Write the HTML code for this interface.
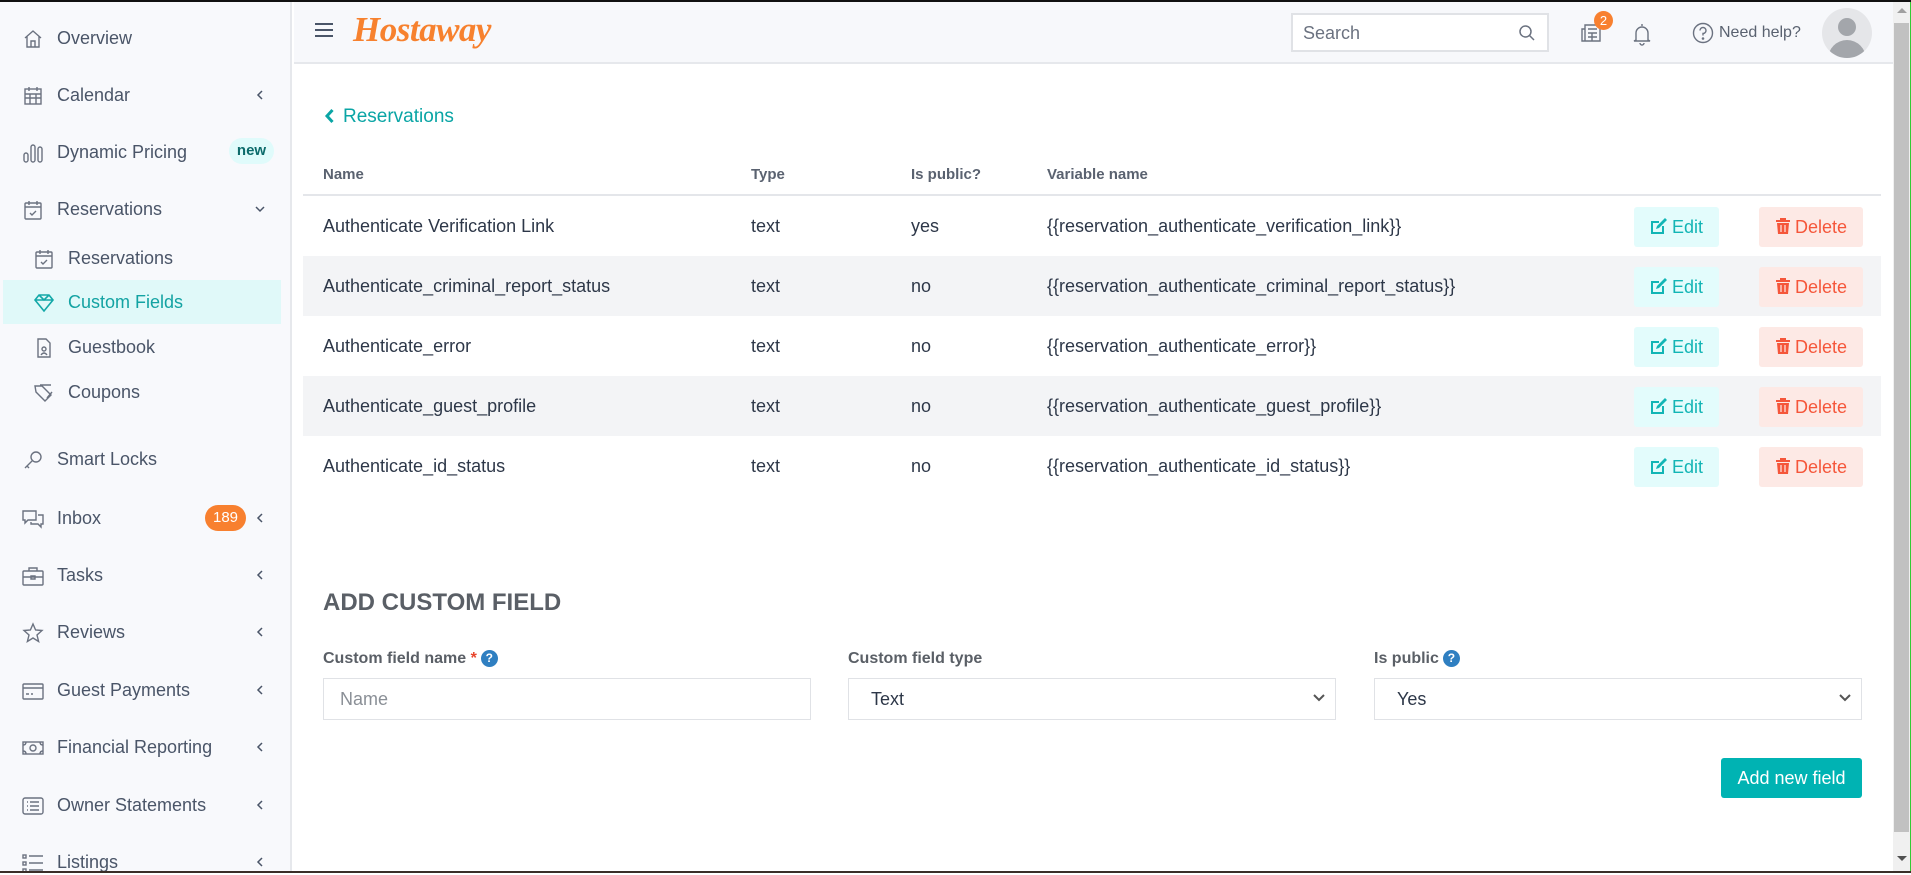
<!DOCTYPE html>
<html><head><meta charset="utf-8"><style>
*{box-sizing:border-box;margin:0;padding:0}
body{width:1911px;height:873px;overflow:hidden;position:relative;background:#fff;font-family:"Liberation Sans",sans-serif;color:#2d3748}
.a{position:absolute}
#top{left:0;top:0;width:1911px;height:2px;background:#111}
#bot{left:0;top:871px;width:1911px;height:2px;background:#3a2e28}
#side{left:0;top:2px;width:292px;height:869px;background:#f8f9fc;border-right:2px solid #e6e8ec}
.si{position:absolute;left:0;width:290px;height:26px;line-height:26px;font-size:18px;color:#4a5568}
.si svg{position:absolute;left:22px;top:3px}
.si span.t{position:absolute;left:57px}
.si.sub svg{left:33px}
.si.sub span.t{left:68px}
.si svg.chev{position:absolute;left:255px;top:8px}
#hdr{left:294px;top:2px;width:1599px;height:62px;background:#f7f8fb;border-bottom:2px solid #e6e8ec}
.th{font-size:15px;color:#5a6270;top:166px;font-weight:bold}
.row{position:absolute;left:303px;width:1578px;height:60px}
.row.g{background:#f3f4f6}
.c{position:absolute;top:0;line-height:60px;font-size:18px;color:#2d3748}
.ed{position:absolute;left:1331px;top:11px;width:85px;height:40px;background:#e3fcfc;border-radius:3px;color:#12b5b5;font-size:18px;line-height:40px;text-align:center}
.dl{position:absolute;left:1456px;top:11px;width:104px;height:40px;background:#fde9e5;border-radius:3px;color:#f5563a;font-size:18px;line-height:40px;text-align:center}
.ed svg,.dl svg{vertical-align:-2px;margin-right:4px}
.lbl{font-size:16px;font-weight:bold;color:#5a5f66;top:650px}
.inp{top:678px;width:488px;height:42px;border:1px solid #e0e2e6;background:#fff;font-size:18px;line-height:40px;padding-left:16px}
.inp svg{position:absolute;right:10px;top:15px}
.q{display:inline-block;width:17px;height:17px;border-radius:50%;background:#2f7fc1;color:#fff;font-size:12px;line-height:17px;text-align:center;vertical-align:1px;margin-left:4px}
</style></head><body>
<svg width="0" height="0" style="position:absolute"><defs>
<symbol id="chl" viewBox="0 0 10 10"><path d="M7 1L3 5L7 9" fill="none" stroke="#4a5568" stroke-width="1.5"/></symbol>
<symbol id="pen" viewBox="0 0 18 18"><path d="M13 9V16H2V5H9" fill="none" stroke="currentColor" stroke-width="2"/><path d="M15 1L17 3L9 11L6 12L7 9Z" fill="currentColor"/></symbol>
<symbol id="trash" viewBox="0 0 16 18"><path d="M1 3H15V5H1ZM5 1H11V3H5ZM2 6H14L13 17H3Z" fill="currentColor"/><path d="M6 8V15M10 8V15" stroke="#fde9e5" stroke-width="1.2"/></symbol>
</defs></svg>
<div class="a" id="top"></div>
<div class="a" id="side">
 <div class="si" style="top:23px"><svg width="22" height="22" viewBox="0 0 22 22" fill="none" stroke="#6b7280" stroke-width="1.4"><path d="M3 10 L11 3 L19 10 M5 8 V19 H17 V8 M9 19 V13 H13 V19"/></svg><span class="t">Overview</span></div>
 <div class="si" style="top:80px"><svg width="22" height="22" viewBox="0 0 22 22" fill="none" stroke="#6b7280" stroke-width="1.4"><rect x="3" y="4" width="16" height="15"/><path d="M7 2v4M15 2v4M3 9h16M3 13h16M8 9v10M14 9v10"/></svg><span class="t">Calendar</span><svg class="chev" width="10" height="10"><use href="#chl"/></svg></div>
 <div class="si" style="top:137px"><svg width="22" height="22" viewBox="0 0 22 22" fill="none" stroke="#6b7280" stroke-width="1.4"><rect x="2" y="11" width="4" height="9" rx="2"/><rect x="9" y="3" width="4" height="17" rx="2"/><rect x="16" y="5" width="4" height="15" rx="2"/></svg><span class="t">Dynamic Pricing</span><span class="a" style="left:229px;top:-1px;width:45px;height:26px;border-radius:13px;background:#e0fbfb;color:#0c6b6b;font-weight:bold;font-size:15px;text-align:center;line-height:26px">new</span></div>
 <div class="si" style="top:194px"><svg width="22" height="22" viewBox="0 0 22 22" fill="none" stroke="#6b7280" stroke-width="1.4"><rect x="3" y="4" width="16" height="16" rx="1"/><path d="M7 2v4M15 2v4M3 8h16M8 14l2 2 4-4"/></svg><span class="t">Reservations</span><svg class="chev" width="10" height="10" style="transform:rotate(-90deg)"><use href="#chl"/></svg></div>
 <div class="si sub" style="top:243px"><svg width="22" height="22" viewBox="0 0 22 22" fill="none" stroke="#6b7280" stroke-width="1.4"><rect x="3" y="4" width="16" height="16" rx="1"/><path d="M7 2v4M15 2v4M3 8h16M8 14l2 2 4-4"/></svg><span class="t">Reservations</span></div>
 <div class="a" style="left:3px;top:278px;width:278px;height:44px;background:#e0f9f9"></div>
 <div class="si sub" style="top:287px;color:#13a3a3"><svg width="22" height="22" viewBox="0 0 22 22" fill="none" stroke="#13a8a8" stroke-width="1.6"><path d="M2 8 L6 3 H16 L20 8 L11 19 Z M2 8 H20 M6 3 L11 8 L16 3"/></svg><span class="t">Custom Fields</span></div>
 <div class="si sub" style="top:332px"><svg width="22" height="22" viewBox="0 0 22 22" fill="none" stroke="#6b7280" stroke-width="1.4"><path d="M5 2 H13 L17 6 V20 H5 Z"/><circle cx="11" cy="12" r="2"/><path d="M8 18 Q11 14 14 18"/></svg><span class="t">Guestbook</span></div>
 <div class="si sub" style="top:377px"><svg width="22" height="22" viewBox="0 0 22 22" fill="none" stroke="#6b7280" stroke-width="1.4"><path d="M2 4 L9 4 L18 13 L12 19 L3 10 Z M7 3 L18 3 M19 10 L14 16"/></svg><span class="t">Coupons</span></div>
 <div class="si" style="top:444px"><svg width="22" height="22" viewBox="0 0 22 22" fill="none" stroke="#6b7280" stroke-width="1.4"><circle cx="14" cy="8" r="5"/><path d="M10 12 L3 19 M5 17 L7 19"/></svg><span class="t">Smart Locks</span></div>
 <div class="si" style="top:503px"><svg width="22" height="22" viewBox="0 0 22 22" fill="none" stroke="#6b7280" stroke-width="1.4"><path d="M1 3 H14 V12 H6 L3 15 V12 H1 Z M16 7 H21 V16 H19 V19 L16 16 H9 V14"/></svg><span class="t">Inbox</span><span class="a" style="left:205px;top:0;width:41px;height:26px;border-radius:13px;background:#f8802f;color:#fff;font-size:15px;text-align:center;line-height:26px">189</span><svg class="chev" width="10" height="10"><use href="#chl"/></svg></div>
 <div class="si" style="top:560px"><svg width="22" height="22" viewBox="0 0 22 22" fill="none" stroke="#6b7280" stroke-width="1.4"><rect x="1" y="6" width="20" height="14" rx="1"/><path d="M7 6 V3 H15 V6 M1 12 H21 M9 11 H13 V14 H9 Z"/></svg><span class="t">Tasks</span><svg class="chev" width="10" height="10"><use href="#chl"/></svg></div>
 <div class="si" style="top:617px"><svg width="22" height="22" viewBox="0 0 22 22" fill="none" stroke="#6b7280" stroke-width="1.4"><path d="M11 2 L13.6 8 L20 8.5 L15 13 L16.6 19.5 L11 16 L5.4 19.5 L7 13 L2 8.5 L8.4 8 Z"/></svg><span class="t">Reviews</span><svg class="chev" width="10" height="10"><use href="#chl"/></svg></div>
 <div class="si" style="top:675px"><svg width="22" height="22" viewBox="0 0 22 22" fill="none" stroke="#6b7280" stroke-width="1.4"><rect x="1" y="4" width="20" height="15" rx="1"/><path d="M1 8 H21 M4 14 H7 M9 14 H11"/></svg><span class="t">Guest Payments</span><svg class="chev" width="10" height="10"><use href="#chl"/></svg></div>
 <div class="si" style="top:732px"><svg width="22" height="22" viewBox="0 0 22 22" fill="none" stroke="#6b7280" stroke-width="1.4"><rect x="1" y="5" width="20" height="12"/><circle cx="11" cy="11" r="3"/><path d="M1 8 Q4 8 4 5 M18 5 Q18 8 21 8 M1 14 Q4 14 4 17 M18 17 Q18 14 21 14"/></svg><span class="t">Financial Reporting</span><svg class="chev" width="10" height="10"><use href="#chl"/></svg></div>
 <div class="si" style="top:790px"><svg width="22" height="22" viewBox="0 0 22 22" fill="none" stroke="#6b7280" stroke-width="1.4"><rect x="1" y="3" width="20" height="16" rx="2"/><path d="M5 7 H6 M8 7 H17 M5 11 H6 M8 11 H17 M5 15 H6 M8 15 H17"/></svg><span class="t">Owner Statements</span><svg class="chev" width="10" height="10"><use href="#chl"/></svg></div>
 <div class="si" style="top:847px"><svg width="22" height="22" viewBox="0 0 22 22" fill="none" stroke="#6b7280" stroke-width="1.4"><rect x="1" y="3" width="3" height="3"/><rect x="1" y="10" width="3" height="3"/><rect x="1" y="17" width="3" height="3"/><path d="M7 4 H21 M7 11 H21 M7 18 H21"/></svg><span class="t">Listings</span><svg class="chev" width="10" height="10"><use href="#chl"/></svg></div>
</div>

<div class="a" id="hdr">
 <svg class="a" style="left:20px;top:19px" width="20" height="18" viewBox="0 0 20 18" stroke="#4a5568" stroke-width="2"><path d="M1 3H19M1 9H19M1 15H19"/></svg>
 <div class="a" style="left:59px;top:8px;font-family:'Liberation Serif',serif;font-style:italic;font-weight:bold;font-size:35px;color:#f7812e;letter-spacing:-0.5px">Hostaway</div>
 <div class="a" style="left:997px;top:11px;width:258px;height:39px;border:2px solid #e0e2e6;background:#fff"><span class="a" style="left:10px;top:8px;font-size:18px;color:#6b7280">Search</span><svg class="a" style="left:225px;top:9px" width="18" height="18" viewBox="0 0 18 18" fill="none" stroke="#6b7280" stroke-width="1.5"><circle cx="7.5" cy="7.5" r="5.5"/><path d="M11.5 11.5L16 16"/></svg></div>
 <svg class="a" style="left:1287px;top:20px" width="22" height="22" viewBox="0 0 22 22" fill="none" stroke="#6b7280" stroke-width="1.4"><path d="M4 3H19V19H4ZM1 7H4V19H1ZM7 7H16M7 11H16M7 15H16M11 11V19"/></svg>
 <div class="a" style="left:1300px;top:9px;width:19px;height:19px;border-radius:50%;background:#f8802f;color:#fff;font-size:13px;text-align:center;line-height:19px">2</div>
 <svg class="a" style="left:1338px;top:20px" width="20" height="24" viewBox="0 0 20 24" fill="none" stroke="#6b7280" stroke-width="1.4"><path d="M10 2V4M4 18V11A6 6 0 0 1 16 11V18L18 19H2ZM8 21A2 2 0 0 0 12 21"/></svg>
 <svg class="a" style="left:1398px;top:20px" width="22" height="22" viewBox="0 0 22 22" fill="none" stroke="#6b7280" stroke-width="1.4"><circle cx="11" cy="11" r="9.5"/><path d="M8 8.5A3 3 0 1 1 11 11.5V13.5"/><circle cx="11" cy="16.5" r=".6" fill="#6b7280"/></svg>
 <div class="a" style="left:1425px;top:22px;font-size:16px;color:#5a6270">Need help?</div>
 <div class="a" style="left:1528px;top:6px;width:50px;height:50px;border-radius:50%;background:#e5e6e9;overflow:hidden"><div class="a" style="left:16px;top:10px;width:18px;height:18px;border-radius:50%;background:#a3a6ab"></div><div class="a" style="left:6px;top:32px;width:38px;height:24px;border-radius:19px 19px 0 0;background:#a3a6ab"></div></div>
</div>

<div class="a" style="left:1893px;top:2px;width:17px;height:869px;background:#f0f0f0"></div>
<div class="a" style="left:1894px;top:23px;width:15px;height:809px;background:#c1c1c1"></div>
<div class="a" style="left:1910px;top:2px;width:1px;height:869px;background:#3c3"></div>
<div class="a" style="left:1897px;top:8px;width:0;height:0;border-left:5px solid transparent;border-right:5px solid transparent;border-bottom:5px solid #a0a0a0"></div>
<div class="a" style="left:1897px;top:856px;width:0;height:0;border-left:5px solid transparent;border-right:5px solid transparent;border-top:5px solid #505050"></div>

<svg class="a" style="left:324px;top:108px" width="11" height="16" viewBox="0 0 11 16"><path d="M8.5 2L3 8L8.5 14" fill="none" stroke="#0aa5a5" stroke-width="3"/></svg>
<div class="a" style="left:343px;top:106px;font-size:19px;color:#0aa5a5">Reservations</div>

<div class="a th" style="left:323px">Name</div>
<div class="a th" style="left:751px">Type</div>
<div class="a th" style="left:911px">Is public?</div>
<div class="a th" style="left:1047px">Variable name</div>
<div class="a" style="left:303px;top:194px;width:1578px;height:2px;background:#e4e6ea"></div>

<div class="row" style="top:196px"><span class="c" style="left:20px">Authenticate Verification Link</span><span class="c" style="left:448px">text</span><span class="c" style="left:608px">yes</span><span class="c" style="left:744px">{{reservation_authenticate_verification_link}}</span><div class="ed"><svg width="18" height="18"><use href="#pen"/></svg>Edit</div><div class="dl"><svg width="16" height="18"><use href="#trash"/></svg>Delete</div></div>
<div class="row g" style="top:256px"><span class="c" style="left:20px">Authenticate_criminal_report_status</span><span class="c" style="left:448px">text</span><span class="c" style="left:608px">no</span><span class="c" style="left:744px">{{reservation_authenticate_criminal_report_status}}</span><div class="ed"><svg width="18" height="18"><use href="#pen"/></svg>Edit</div><div class="dl"><svg width="16" height="18"><use href="#trash"/></svg>Delete</div></div>
<div class="row" style="top:316px"><span class="c" style="left:20px">Authenticate_error</span><span class="c" style="left:448px">text</span><span class="c" style="left:608px">no</span><span class="c" style="left:744px">{{reservation_authenticate_error}}</span><div class="ed"><svg width="18" height="18"><use href="#pen"/></svg>Edit</div><div class="dl"><svg width="16" height="18"><use href="#trash"/></svg>Delete</div></div>
<div class="row g" style="top:376px"><span class="c" style="left:20px">Authenticate_guest_profile</span><span class="c" style="left:448px">text</span><span class="c" style="left:608px">no</span><span class="c" style="left:744px">{{reservation_authenticate_guest_profile}}</span><div class="ed"><svg width="18" height="18"><use href="#pen"/></svg>Edit</div><div class="dl"><svg width="16" height="18"><use href="#trash"/></svg>Delete</div></div>
<div class="row" style="top:436px"><span class="c" style="left:20px">Authenticate_id_status</span><span class="c" style="left:448px">text</span><span class="c" style="left:608px">no</span><span class="c" style="left:744px">{{reservation_authenticate_id_status}}</span><div class="ed"><svg width="18" height="18"><use href="#pen"/></svg>Edit</div><div class="dl"><svg width="16" height="18"><use href="#trash"/></svg>Delete</div></div>

<div class="a" style="left:323px;top:589px;font-size:24px;font-weight:bold;color:#5a5f66">ADD CUSTOM FIELD</div>
<div class="a lbl" style="left:323px">Custom field name <span style="color:#e8452c">*</span><span class="q">?</span></div>
<div class="a lbl" style="left:848px">Custom field type</div>
<div class="a lbl" style="left:1374px">Is public<span class="q">?</span></div>
<div class="a inp" style="left:323px;color:#8a8f96">Name</div>
<div class="a inp" style="left:848px;padding-left:22px">Text<svg width="12" height="8" viewBox="0 0 12 8"><path d="M1 1L6 6L11 1" fill="none" stroke="#555" stroke-width="2"/></svg></div>
<div class="a inp" style="left:1374px;padding-left:22px">Yes<svg width="12" height="8" viewBox="0 0 12 8"><path d="M1 1L6 6L11 1" fill="none" stroke="#555" stroke-width="2"/></svg></div>
<div class="a" style="left:1721px;top:758px;width:141px;height:40px;background:#00b3b3;border-radius:3px;color:#fff;font-size:18px;line-height:40px;text-align:center">Add new field</div>
<div class="a" id="bot"></div>
</body></html>
